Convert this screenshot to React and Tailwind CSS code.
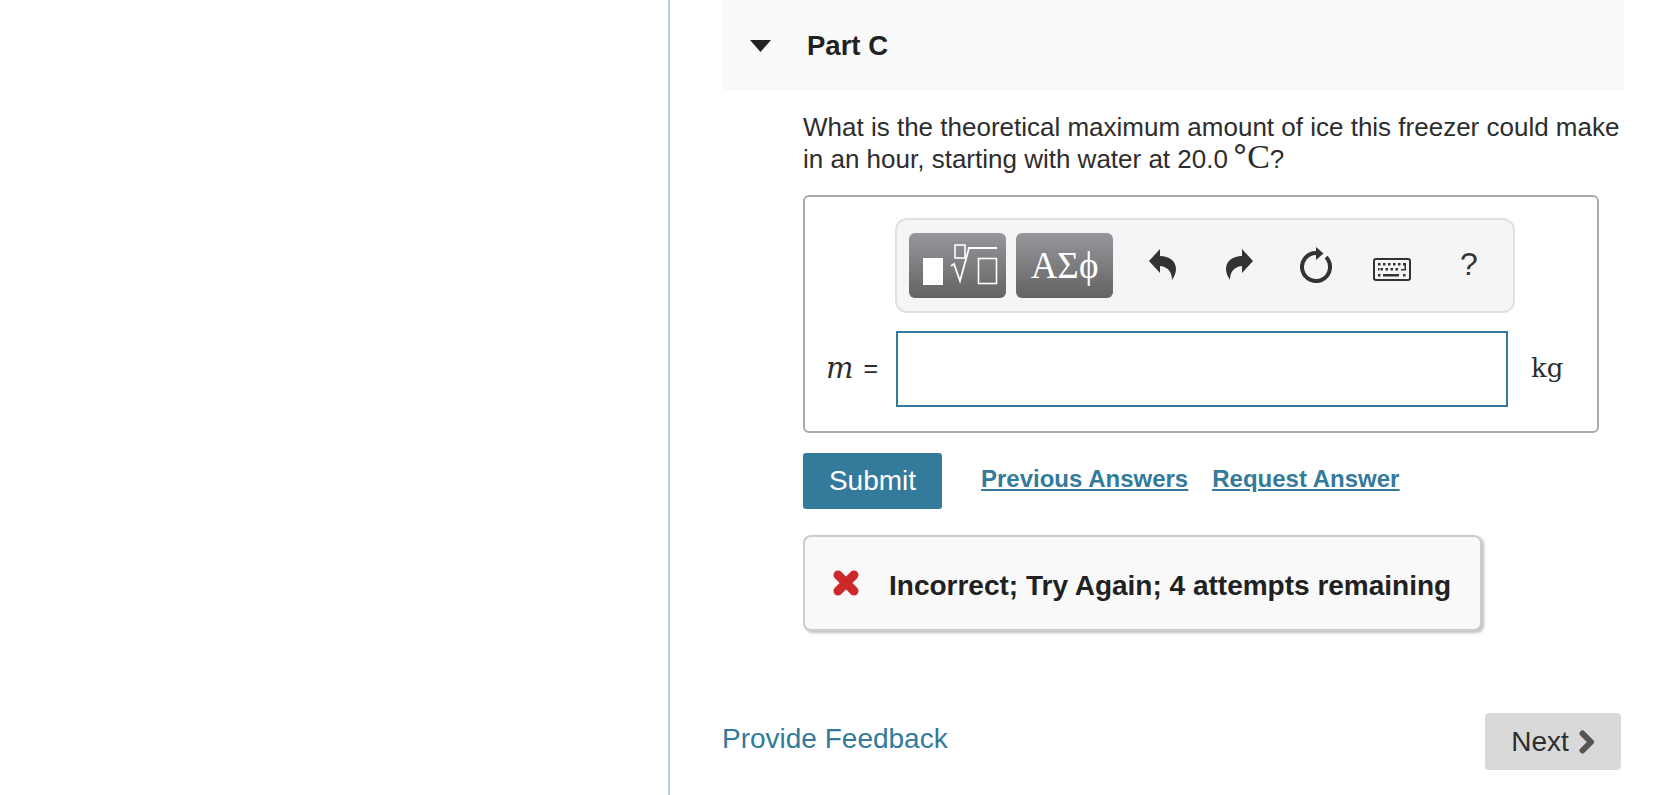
const sans = "font-['Liberation_Sans',Arial,sans-serif]";
const serif = "font-['Liberation_Serif','Times_New_Roman',serif]";
const mathSerif = "font-['DejaVu_Serif',serif]";

function MathIcon() {
  return (
    <svg width="97" height="65" viewBox="0 0 97 65" fill="none">
      <rect x="14" y="25" width="20" height="27" fill="#fff" />
      <rect x="46" y="12" width="10" height="13" stroke="#fff" strokeWidth="1.6" />
      <path d="M42 33l3-2 6 17 9-33h28" stroke="#fff" strokeWidth="1.8" />
      <rect x="69.5" y="25.5" width="18" height="25" stroke="#fff" strokeWidth="1.6" />
    </svg>
  );
}

function ReplyArrow({ flip }) {
  return (
    <svg width="27" height="31" viewBox="0 0 27 31" className={flip ? "-scale-x-100" : ""}>
      <path d="M0 12L11 0v7c9 0 16 5 16 13 0 4-2 8-4 11 0-7-3-13-12-14v7z" fill="#333" />
    </svg>
  );
}

function ReloadIcon() {
  return (
    <svg width="33" height="36" viewBox="0 0 33 36" fill="none">
      <path d="M16 6A14 14 0 1 0 26 10.2" stroke="#333" strokeWidth="4" />
      <path d="M16 0l7.5 6.5L16 13z" fill="#333" />
    </svg>
  );
}

function KeyboardIcon() {
  const top = [5, 10, 15, 20, 25, 30];
  const mid = [7.5, 12.5, 17.5, 22.5];
  return (
    <svg width="38" height="23" viewBox="0 0 38 23" fill="none">
      <rect x="1" y="1" width="36" height="21" rx="2" fill="#f5f5f5" stroke="#333" strokeWidth="2" />
      {top.map((x) => (
        <rect key={x} x={x} y="5" width="2.5" height="2.5" fill="#333" />
      ))}
      {mid.map((x) => (
        <rect key={x} x={x} y="10" width="2.5" height="2.5" fill="#333" />
      ))}
      <path d="M5 10h1.5v2.5H5zM28 11h3.5V5H33v7.5h-5z" fill="#333" />
      <rect x="5" y="16" width="2.5" height="2.5" fill="#333" />
      <rect x="10" y="16" width="16" height="2.5" fill="#333" />
      <rect x="30" y="16" width="2.5" height="2.5" fill="#333" />
    </svg>
  );
}

function Toolbar() {
  const btn = "flex h-[65px] w-[97px] items-center justify-center rounded-[6px] bg-gradient-to-b from-[#98969c] to-[#636363]";
  const cell = "flex w-[77px] items-center justify-center text-[#333]";
  return (
    <div className="ml-[90px] flex h-[95px] w-[620px] items-center rounded-[12px] border-2 border-[#e0e0e0] bg-[#f5f5f5] pl-[12px]">
      <div className={btn}>
        <MathIcon />
      </div>
      <div className={`${btn} ml-[10px] mr-[11px] ${serif} text-[37px] text-white`}>ΑΣϕ</div>
      <div className={`${cell} pb-[3px]`}>
        <ReplyArrow />
      </div>
      <div className={`${cell} pb-[3px]`}>
        <ReplyArrow flip />
      </div>
      <div className={`${cell} pb-[2px]`}>
        <ReloadIcon />
      </div>
      <div className={`${cell} pr-[3px] pt-[7px]`}>
        <KeyboardIcon />
      </div>
      <div className={`${cell} ${sans} pb-[4px] pr-[3px] text-[32px]`}>?</div>
    </div>
  );
}

export default function App() {
  return (
    <div className={`flex h-[795px] overflow-hidden bg-white ${sans} text-[#2d2d2d]`}>
      <div className="w-[670px] shrink-0 border-r-2 border-[#c0cfdf]" />

      <div className="w-[902px] ml-[52px]">
        <div className="flex h-[91px] items-center bg-[#f9f9f9] pl-[28px]">
          <svg width="21" height="12" viewBox="0 0 21 12">
            <path d="M0 0h21L10.5 12z" fill="#212121" />
          </svg>
          <h2 className="ml-[36px] text-[27.5px] font-bold text-[#212121]">Part C</h2>
        </div>

        <div className="pl-[81px]">
          <p className="mt-[20px] w-[821px] text-[26px] leading-[32px]">
            What is the theoretical maximum amount of ice this freezer could make in an hour, starting with water at 20.0{" "}
            <span className={`${serif} -ml-[5px] text-[34px] leading-[0]`}>
              <span className="relative -top-[10px] -mr-[3px] text-[32px]">∘</span>C
            </span>
            ?
          </p>

          <div className="mt-[20px] h-[238px] w-[796px] rounded-[6px] border-2 border-[#aaa] pt-[21px]">
            <Toolbar />
            <div className="mt-[18px] flex items-center">
              <div className="flex w-[91px] items-center justify-end pr-[18px]">
                <span className={`${mathSerif} text-[29px] italic`}>m</span>
                <span className="ml-[10px] text-[25px]">=</span>
              </div>
              <div className="h-[76px] w-[612px] border-2 border-[#337a9b] bg-white" />
              <span className={`${mathSerif} mb-[2px] ml-[23px] text-[26px]`}>kg</span>
            </div>
          </div>

          <div className="mt-[20px] flex items-center">
            <button type="button" className="h-[56px] w-[139px] rounded-[3px] bg-[#337a9b] text-[28px] text-white">
              Submit
            </button>
            <div className="mb-[4px] ml-[39px] flex gap-[24px] text-[24px] font-bold text-[#337a9b] underline">
              <a>Previous Answers</a>
              <a>Request Answer</a>
            </div>
          </div>

          <div className="mt-[26px] flex h-[96px] w-[679px] items-center rounded-[8px] border-2 border-[#ccc] bg-[#f9f9f9] pl-[28px] shadow-[2px_2px_3px_rgba(0,0,0,0.25)]">
            <svg width="26" height="26" viewBox="0 0 26 26">
              <path d="M5 5l16 16M21 5L5 21" stroke="#cc2a2a" strokeWidth="9" strokeLinecap="round" />
            </svg>
            <span className="ml-[30px] pt-[5px] text-[28px] font-bold text-[#212121]">Incorrect; Try Again; 4 attempts remaining</span>
          </div>
        </div>

        <div className="mt-[82px] flex items-center justify-between pr-[3px]">
          <a className="mb-[6px] text-[28px] text-[#337a9b]">Provide Feedback</a>
          <button type="button" className="flex h-[57px] w-[136px] items-center justify-center gap-[10px] rounded-[4px] bg-[#d9d9d9] text-[28px] text-[#2d2d2d]">
            Next
            <svg width="16" height="24" viewBox="0 0 16 24" fill="none">
              <path d="M3.5 3.5l8.5 8.5-8.5 8.5" stroke="#555" strokeWidth="6" strokeLinejoin="round" strokeLinecap="round" />
            </svg>
          </button>
        </div>
      </div>
    </div>
  );
}
